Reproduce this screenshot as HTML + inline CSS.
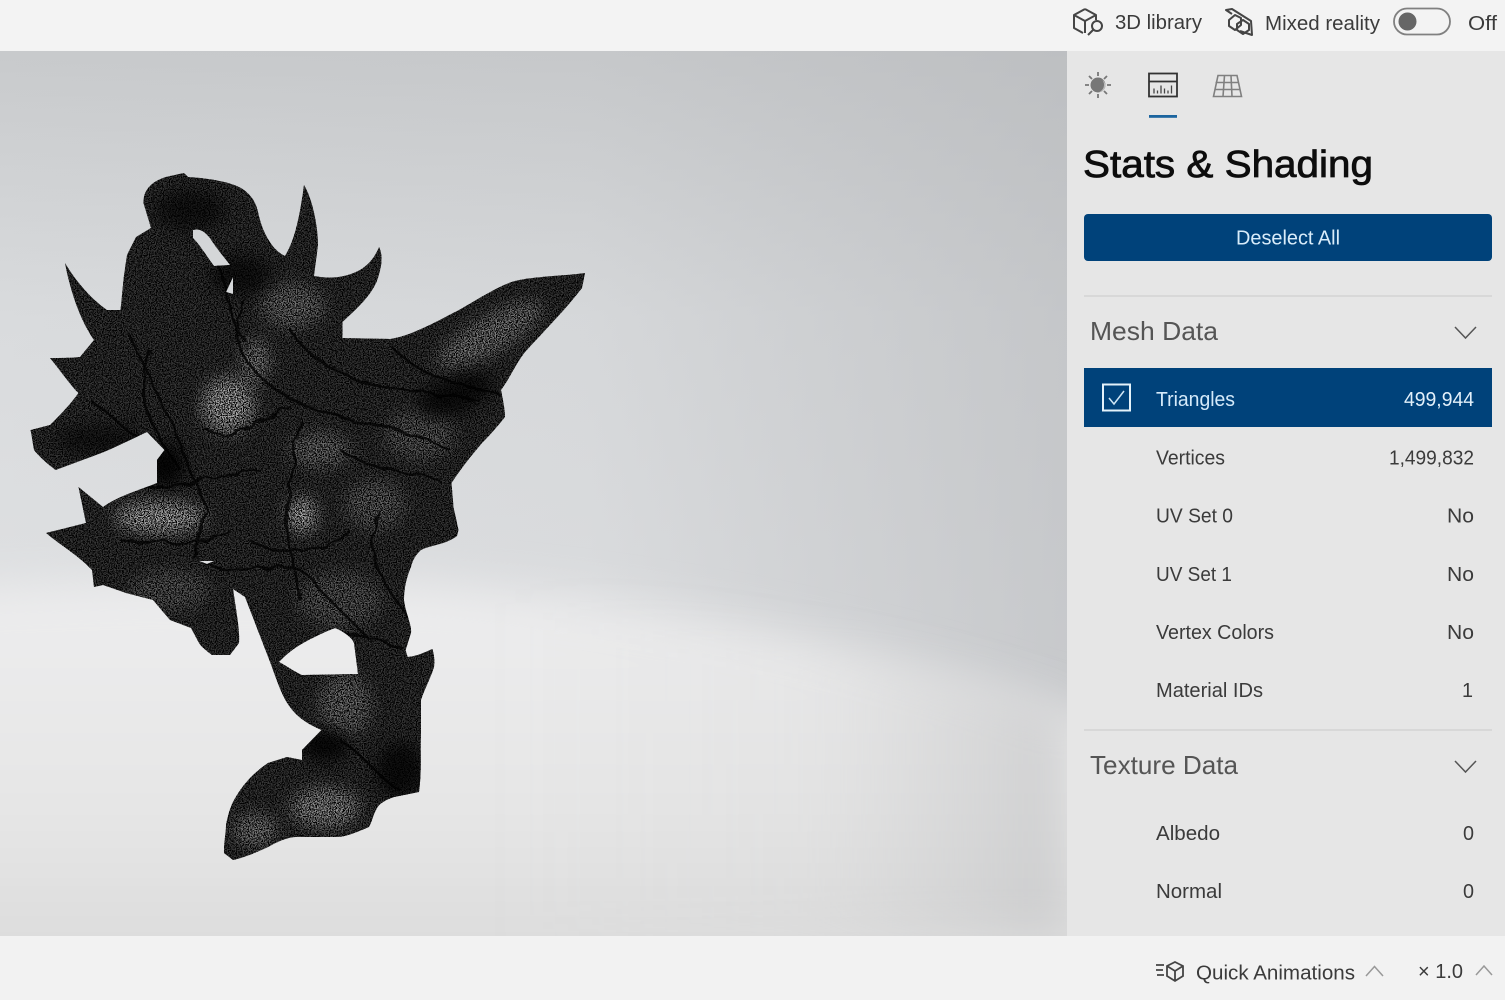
<!DOCTYPE html>
<html><head><meta charset="utf-8"><title>3D Viewer</title>
<style>
html,body{margin:0;padding:0;background:#f3f3f3;width:1505px;height:1000px;overflow:hidden}
svg{display:block}
text{font-family:"Liberation Sans",sans-serif;fill:#3a3a3a}
</style></head><body>
<svg xmlns="http://www.w3.org/2000/svg" width="1505" height="1000" viewBox="0 0 1505 1000">
<defs>
<linearGradient id="up" x1="0" y1="0" x2="0" y2="1"><stop offset="0" stop-color="#c8cacc"/><stop offset=".3" stop-color="#d9dbdd"/><stop offset="1" stop-color="#e4e5e7"/></linearGradient>
<linearGradient id="rs" x1="0" y1="0" x2="1" y2="0"><stop offset="0" stop-color="#b4b6b9" stop-opacity="0"/><stop offset=".55" stop-color="#b4b6b9" stop-opacity=".1"/><stop offset="1" stop-color="#b4b6b9" stop-opacity=".55"/></linearGradient>
<linearGradient id="lo" x1="0" y1="0" x2="0" y2="1"><stop offset="0" stop-color="#ededee"/><stop offset=".55" stop-color="#e6e6e6"/><stop offset="1" stop-color="#dadada"/></linearGradient>
<linearGradient id="lr" x1="0" y1="0" x2="1" y2="0"><stop offset="0" stop-color="#c4c5c6" stop-opacity="0"/><stop offset=".55" stop-color="#c4c5c6" stop-opacity=".1"/><stop offset="1" stop-color="#bcbdbf" stop-opacity=".55"/></linearGradient>
<filter id="b14" x="-10%" y="-10%" width="120%" height="120%"><feGaussianBlur stdDeviation="22"/></filter>
<filter id="b9" x="-50%" y="-50%" width="200%" height="200%"><feGaussianBlur stdDeviation="8"/></filter>
<filter id="soft"><feGaussianBlur stdDeviation=".35"/></filter>
<filter id="noise" x="0" y="0" width="100%" height="100%">
<feTurbulence type="fractalNoise" baseFrequency=".85" numOctaves="2" seed="4"/>
<feColorMatrix type="matrix" values="0 0 0 0 0  0 0 0 0 0  0 0 0 0 0  9 0 0 0 -4.100"/>
<feGaussianBlur stdDeviation=".3"/>
</filter>
<filter id="wob" x="-10%" y="-10%" width="120%" height="120%">
<feTurbulence type="fractalNoise" baseFrequency=".06" numOctaves="2" seed="7"/>
<feDisplacementMap in="SourceGraphic" scale="9"/>
</filter>
<clipPath id="sil"><path clip-rule="evenodd" d="M143.500 203C143 190 152 180 170 176L184 173L188 177C205 178 228 181 241 188C252 195 256 203 258 212C262 232 272 250 285 256C295 240 300 215 304 185C312 198 318 225 318 245L314 276C330 279 345 278 360 270C370 264 376 255 379 247C383 255 382 265 378 278C372 296 355 310 342.500 322L342.500 338L390 339C410 336 430 325 459 310C480 298 500 285 515 281C535 276 565 276 585 273L582 288C565 310 545 330 525 352C515 365 510 378 501 390C503 400 505 410 505 417C497 427 490 435 482 443C470 457 460 470 451.500 483L453.500 507L458.500 530L457 536C445 545 430 545 421 550C415 555 412 562 411 567C406 578 404 590 404 600C406 615 412 625 411 633L405.600 650L407.600 657C418 656 425 652 432.500 649C434 655 435 660 434 667C430 680 424 690 421 700L421 733C420 750 422 770 419 792L394 797C385 800 379 804 377 808C373 815 372 822 369 827C355 833 345 837 337 837L295 837C285 838 275 843 268 847C255 853 243 858 233 860L224 853C224 840 226 833 226 825C229 810 232 803 237 795C245 782 255 772 268 763L287 757L302 760L302 750L321.500 730C310 725 302 720 296 714C285 703 280 690 272 667L245 597L233 589C236 610 240 630 239 643L230 655L212 655C205 650 200 645 199 643L191 628L170 620L153 600L126 593L103 585L94 587L92 570C78 555 60 545 46 533L86 523L78.500 487L103 507C120 495 140 490 157 483L157 460L164.500 450L147 432C130 440 110 450 96 455L55.500 470C45 462 38 455 34 450L30.600 430L50 425C60 415 70 405 78.500 393C70 385 60 370 50 358C60 358 70 358 80 357L94 340C80 320 70 290 65 263C75 280 90 298 107 310L120.500 310L124 275L127 255L136 237L151 228ZM193 230C200 228 205 232 210 238C216 248 225 258 230 265L214 266C208 258 200 245 193 238ZM233 277L226 292L233 294ZM335 628C345 632 352 638 354 643L358 674L302 675C295 672 285 665 279 662C290 650 305 640 335 628ZM199 561L214 561L207 564Z"/></clipPath>
</defs>

<!-- viewport background -->
<rect x="0" y="51" width="1067" height="885" fill="url(#up)"/>
<rect x="0" y="51" width="1067" height="885" fill="url(#rs)"/>
<path d="M-60 590C200 578 400 578 560 598C760 622 930 665 1120 725V990H-60Z" fill="url(#lo)" filter="url(#b14)"/>
<path d="M500 600C760 622 930 665 1067 715V936H500Z" fill="url(#lr)" filter="url(#b14)"/>
<rect x="0" y="0" width="1505" height="51" fill="#f3f3f3"/>
<rect x="0" y="936" width="1505" height="64" fill="#f2f2f2"/>

<!-- model -->
<g clip-path="url(#sil)">
<rect x="20" y="165" width="575" height="700" fill="#363636"/>
<g filter="url(#b9)" opacity=".8">
<ellipse cx="228" cy="405" rx="26" ry="28" fill="#c8c8c8"/>
<ellipse cx="293" cy="306" rx="32" ry="22" fill="#808080"/>
<ellipse cx="490" cy="335" rx="60" ry="18" fill="#909090" transform="rotate(-30 490 335)"/>
<ellipse cx="160" cy="517" rx="45" ry="16" fill="#d0d0d0"/>
<ellipse cx="302" cy="515" rx="14" ry="18" fill="#e0e0e0"/>
<ellipse cx="256" cy="361" rx="14" ry="22" fill="#9a9a9a"/>
<ellipse cx="420" cy="435" rx="35" ry="25" fill="#6a6a6a"/>
<ellipse cx="320" cy="450" rx="30" ry="18" fill="#808080"/>
<ellipse cx="375" cy="505" rx="30" ry="25" fill="#707070"/>
<ellipse cx="340" cy="600" rx="42" ry="28" fill="#686868"/>
<ellipse cx="345" cy="705" rx="26" ry="32" fill="#808080"/>
<ellipse cx="325" cy="808" rx="35" ry="20" fill="#a8a8a8"/>
<ellipse cx="255" cy="830" rx="22" ry="16" fill="#969696"/>
<ellipse cx="170" cy="590" rx="40" ry="20" fill="#686868"/>
</g>
<rect x="20" y="165" width="575" height="700" filter="url(#noise)"/>
<g filter="url(#wob)" fill="none" stroke="#040404" stroke-width="2.500" opacity=".75">
<path d="M130 335L170 420L205 505L195 560"/>
<path d="M205 430C240 445 260 420 290 405M245 300C225 340 250 370 270 385C310 420 390 420 450 450"/>
<path d="M290 330C330 390 400 390 480 400M200 560C250 590 290 540 320 590L370 640"/>
<path d="M380 510C360 560 390 590 410 620M300 420L285 520L300 600"/>
<path d="M120 480C170 500 210 470 260 470M240 600L262 660"/>
<path d="M390 345C420 380 470 385 500 395M340 450C370 470 400 470 440 480M210 250C230 280 225 320 245 340"/>
<path d="M250 540C280 560 330 550 350 530M120 540C170 540 200 550 230 530M300 650C330 620 380 640 405 650"/>
<path d="M150 350C130 400 160 440 180 470M90 400C120 420 130 440 150 440M340 740C370 760 380 780 400 790"/>
</g>
<ellipse cx="455" cy="395" rx="40" ry="18" fill="#050505" opacity=".7" transform="rotate(-20 455 395)" filter="url(#b9)"/>
<ellipse cx="165" cy="465" rx="20" ry="22" fill="#050505" opacity=".85" filter="url(#b9)"/>
<ellipse cx="400" cy="770" rx="24" ry="28" fill="#050505" opacity=".7" filter="url(#b9)"/>
<ellipse cx="325" cy="745" rx="25" ry="16" fill="#050505" opacity=".8" filter="url(#b9)"/>
<ellipse cx="190" cy="210" rx="35" ry="20" fill="#050505" opacity=".55" filter="url(#b9)"/>
<ellipse cx="240" cy="275" rx="30" ry="20" fill="#050505" opacity=".6" filter="url(#b9)"/>
<ellipse cx="100" cy="440" rx="45" ry="15" fill="#050505" opacity=".5" filter="url(#b9)"/>
</g>

<!-- side panel -->
<rect x="1067" y="51" width="438" height="885" fill="#e6e6e6"/>

<g filter="url(#soft)">
<!-- top bar -->
<g fill="none" stroke="#444" stroke-width="2" stroke-linejoin="round">
<path d="M1085 9L1074 15V28L1083 33M1085 9L1096 15V20M1074 15L1085 21L1096 15M1085 21V33"/>
<circle cx="1097" cy="26" r="5"/><path d="M1093 30L1088 35"/>
<path d="M1232 14L1226 10L1232 9L1251 21L1252 35L1240 31"/>
<path d="M1229 20L1235 15L1241 18V25L1235 30L1229 26ZM1237 24L1243 20L1249 24V30L1243 34L1237 30Z"/>
</g>
<text x="1115" y="29" font-size="20" textLength="87" lengthAdjust="spacingAndGlyphs">3D library</text>
<text x="1265" y="30" font-size="20" textLength="115" lengthAdjust="spacingAndGlyphs">Mixed reality</text>
<rect x="1394" y="8.500" width="56" height="26" rx="13" fill="none" stroke="#808080" stroke-width="1.800"/>
<circle cx="1407.500" cy="21.500" r="9" fill="#666"/>
<text x="1468" y="30" font-size="20" textLength="29" lengthAdjust="spacingAndGlyphs">Off</text>

<!-- tabs -->
<circle cx="1098" cy="85" r="7.500" fill="#777"/>
<path d="M1098 92.500a7.500 7.500 0 0 0 7.500 -7.500a7 7 0 0 0 -3 -5a8 8 0 0 1 -4.500 12.500z" fill="#bbb"/>
<path d="M1098 72v4M1098 94v4M1085 85h4M1107 85h4M1089 76l3 3M1107 76l-3 3M1089 94l3-3M1107 94l-3-3" stroke="#777" stroke-width="1.800" fill="none"/>
<rect x="1149" y="73.500" width="28" height="23" fill="none" stroke="#333" stroke-width="1.800"/>
<path d="M1149 81.500H1177" stroke="#333" stroke-width="1.800"/>
<path d="M1154 93.500v-5M1157.500 93.500v-3M1161 93.500v-8M1164.500 93.500v-5M1168 93.500v-3M1171.500 93.500v-8" stroke="#444" stroke-width="1.300" fill="none"/>
<path d="M1218 75.500H1237L1241.500 96.500H1213.500ZM1215.500 82.500H1239M1214.500 89.500H1240.500M1224.500 75.500L1223 96.500M1231 75.500L1232 96.500" fill="none" stroke="#808080" stroke-width="1.600"/>
<rect x="1149" y="115" width="28" height="2.800" fill="#1c659f"/>

<text x="1083" y="177" font-size="38" textLength="290" lengthAdjust="spacingAndGlyphs" style="fill:#111;stroke:#111;stroke-width:.8">Stats &amp; Shading</text>
<rect x="1084" y="214" width="408" height="47" rx="4" fill="#03427a"/>
<text x="1236" y="244.500" font-size="20" textLength="104" lengthAdjust="spacingAndGlyphs" style="fill:#d8ecfa">Deselect All</text>
<path d="M1084 296H1492M1084 730H1492" stroke="#d4d4d4" stroke-width="1.500"/>

<text x="1090" y="340" font-size="26" textLength="128" lengthAdjust="spacingAndGlyphs" style="fill:#555">Mesh Data</text>
<path d="M1455 327L1465.500 338L1476 327M1455 761L1465.500 772L1476 761" fill="none" stroke="#555" stroke-width="1.500"/>
<rect x="1084" y="368" width="408" height="59" fill="#03427a"/>
<rect x="1103" y="384.500" width="27" height="26" fill="none" stroke="#e4f2fa" stroke-width="2"/>
<path d="M1109 398L1114 404L1124 391" fill="none" stroke="#cfe6f5" stroke-width="1.500"/>
<text x="1156" y="406" font-size="20" textLength="79" lengthAdjust="spacingAndGlyphs" style="fill:#d4eafa">Triangles</text>
<text x="1404" y="406" font-size="20" textLength="70" lengthAdjust="spacingAndGlyphs" style="fill:#e2f0fa">499,944</text>

<text x="1156" y="464.500" font-size="20" textLength="69" lengthAdjust="spacingAndGlyphs">Vertices</text>
<text x="1389" y="464.500" font-size="20" textLength="85" lengthAdjust="spacingAndGlyphs">1,499,832</text>
<text x="1156" y="522.500" font-size="20" textLength="77" lengthAdjust="spacingAndGlyphs">UV Set 0</text>
<text x="1447" y="522.500" font-size="20" textLength="27" lengthAdjust="spacingAndGlyphs">No</text>
<text x="1156" y="581" font-size="20" textLength="76" lengthAdjust="spacingAndGlyphs">UV Set 1</text>
<text x="1447" y="581" font-size="20" textLength="27" lengthAdjust="spacingAndGlyphs">No</text>
<text x="1156" y="639" font-size="20" textLength="118" lengthAdjust="spacingAndGlyphs">Vertex Colors</text>
<text x="1447" y="639" font-size="20" textLength="27" lengthAdjust="spacingAndGlyphs">No</text>
<text x="1156" y="697" font-size="20" textLength="107" lengthAdjust="spacingAndGlyphs">Material IDs</text>
<text x="1462" y="697" font-size="20" textLength="11" lengthAdjust="spacingAndGlyphs">1</text>

<text x="1090" y="774" font-size="26" textLength="148" lengthAdjust="spacingAndGlyphs" style="fill:#555">Texture Data</text>
<text x="1156" y="840" font-size="20" textLength="64" lengthAdjust="spacingAndGlyphs">Albedo</text>
<text x="1463" y="840" font-size="20" textLength="11" lengthAdjust="spacingAndGlyphs">0</text>
<text x="1156" y="898" font-size="20" textLength="66" lengthAdjust="spacingAndGlyphs">Normal</text>
<text x="1463" y="898" font-size="20" textLength="11" lengthAdjust="spacingAndGlyphs">0</text>

<!-- bottom bar -->
<path d="M1156 965H1164M1156 970H1163M1157 975H1164" stroke="#444" stroke-width="1.800" fill="none"/>
<path d="M1175 962L1183 966V976L1175 981L1167 976V966ZM1167 966L1175 971L1183 966M1175 971V981" fill="none" stroke="#444" stroke-width="1.800"/>
<text x="1196" y="979.500" font-size="20" textLength="159" lengthAdjust="spacingAndGlyphs">Quick Animations</text>
<path d="M1366 976L1374.500 966.500L1383 976M1476 975L1484 966L1492 975" fill="none" stroke="#999" stroke-width="1.500"/>
<text x="1418" y="978" font-size="20" textLength="45" lengthAdjust="spacingAndGlyphs">× 1.0</text>
</g>
</svg>
</body></html>
